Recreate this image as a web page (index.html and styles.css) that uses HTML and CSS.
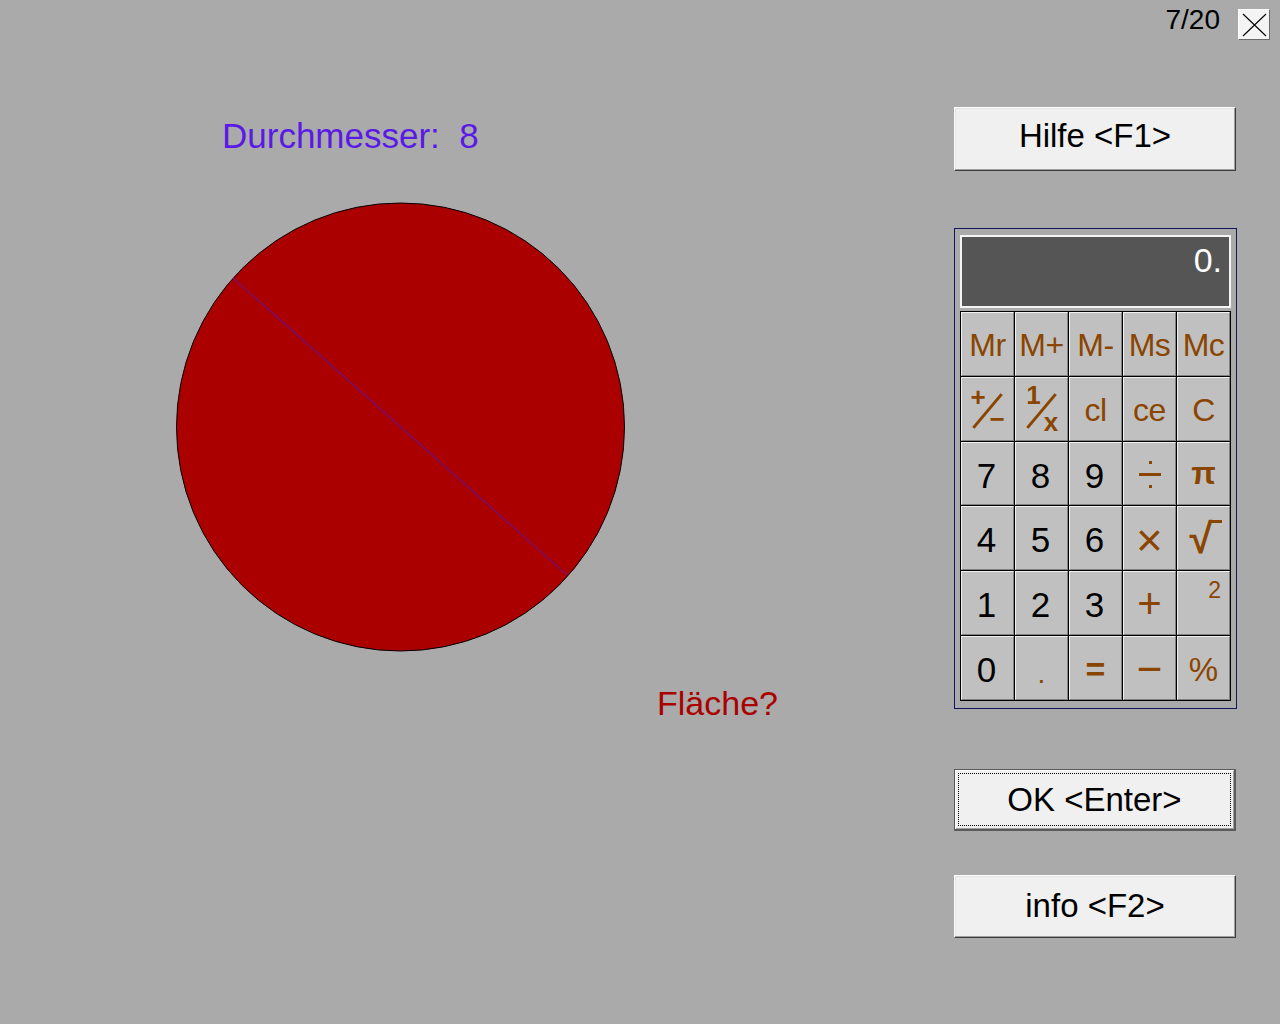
FILE: index.html
```html
<!DOCTYPE html>
<html lang="de">
<head>
<meta charset="utf-8">
<title>Fläche</title>
<link rel="stylesheet" href="styles.css">
</head>
<body>
<div class="page">
  <header class="topbar">
    <span class="counter">7/20</span>
    <span class="closebox">
      <svg width="29" height="28" viewBox="0 0 29 28"><path d="M3 3 L26 25 M26 3 L3 25" stroke="#000" stroke-width="1.1" fill="none"/></svg>
    </span>
  </header>
  <main class="main">
    <section class="task">
      <div class="given">Durchmesser:  8</div>
      <svg class="figure" width="452" height="452" viewBox="0 0 452 452">
        <circle cx="225.5" cy="225" r="224" fill="#aa0000" stroke="#000" stroke-width="1"/>
        <line x1="58" y1="76" x2="392" y2="373" stroke="#7e0c62" stroke-width="1.6"/>
      </svg>
      <div class="question">Fläche?</div>
    </section>
    <aside class="side">
      <div class="btn btn-help">Hilfe &lt;F1&gt;</div>
      <div class="calc">
        <div class="display">0.</div>
        <div class="keys">
          <div class="key op txt">Mr</div>
          <div class="key op txt">M+</div>
          <div class="key op txt">M-</div>
          <div class="key op txt">Ms</div>
          <div class="key op txt">Mc</div>

          <div class="key op"><span class="frac"><span class="n">+</span><span class="sl"></span><span class="d minus">−</span></span></div>
          <div class="key op"><span class="frac"><span class="n one">1</span><span class="sl"></span><span class="d">x</span></span></div>
          <div class="key op txt">cl</div>
          <div class="key op txt">ce</div>
          <div class="key op txt">C</div>

          <div class="key num">7</div>
          <div class="key num">8</div>
          <div class="key num">9</div>
          <div class="key op"><span class="divsym" aria-label="÷"></span></div>
          <div class="key op pi">π</div>

          <div class="key num">4</div>
          <div class="key num">5</div>
          <div class="key num">6</div>
          <div class="key op times">×</div>
          <div class="key op sqrt">√<span class="bar"></span></div>

          <div class="key num">1</div>
          <div class="key num">2</div>
          <div class="key num">3</div>
          <div class="key op plus">+</div>
          <div class="key op sq">2</div>

          <div class="key num">0</div>
          <div class="key op dot">.</div>
          <div class="key op eq">=</div>
          <div class="key op minusk">−</div>
          <div class="key op pct">%</div>
        </div>
      </div>
      <div class="btn btn-ok"><span class="focus">OK &lt;Enter&gt;</span></div>
      <div class="btn btn-info">info &lt;F2&gt;</div>
    </aside>
  </main>
</div>
</body>
</html>
```

FILE: styles.css
```css
* { box-sizing: border-box; }
html, body { margin: 0; padding: 0; }
body {
  background: #aaaaaa;
  font-family: "Liberation Sans", Arial, sans-serif;
  color: #000;
}
.page {
  width: 1280px;
  height: 1024px;
  display: flex;
  flex-direction: column;
}
.topbar {
  height: 40px;
  display: flex;
  justify-content: flex-end;
  align-items: flex-start;
  padding-top: 5px;
  padding-right: 10px;
}
.counter {
  font-size: 28px;
  line-height: 30px;
  margin-right: 18px;
}
.closebox {
  margin-top: 4px;
  width: 32px;
  height: 31px;
  background: #f4f4f4;
  border-top: 1px solid #ffffff;
  border-left: 1px solid #ffffff;
  border-right: 1px solid #696969;
  border-bottom: 1px solid #696969;
  display: flex;
  align-items: center;
  justify-content: center;
}
.closebox svg { display: block; }

.main {
  flex: 1;
  display: flex;
}
.task {
  flex: 1;
  display: flex;
  flex-direction: column;
  align-items: flex-start;
}
.given {
  margin-top: 76px;
  margin-left: 222px;
  font-size: 35px;
  line-height: 40px;
  color: #5a1ae6;
  white-space: pre;
}
.figure {
  display: block;
  margin-top: 46px;
  margin-left: 175px;
}
.question {
  margin-top: 29px;
  margin-left: 657px;
  font-size: 34px;
  line-height: 40px;
  color: #aa0000;
}

.side {
  width: 283px;
  margin-right: 43px;
  display: flex;
  flex-direction: column;
  align-items: flex-start;
}
.btn {
  width: 282px;
  background: #f0f0f0;
  border-top: 1px solid #ffffff;
  border-left: 1px solid #ffffff;
  border-right: 1px solid #3c3c3c;
  border-bottom: 1px solid #3c3c3c;
  box-shadow: inset -1px -1px 0 #a0a0a0, inset 1px 1px 0 #e3e3e3;
  display: flex;
  align-items: center;
  justify-content: center;
  font-size: 33px;
  line-height: 38px;
}
.btn-help {
  margin-top: 67px;
  height: 64px;
  padding-bottom: 6px;
}
.btn-ok {
  margin-top: 60px;
  height: 62px;
  border: 1px solid #5a5a5a;
  border-right-width: 2px;
  border-bottom-width: 2px;
  box-shadow: inset 1px 1px 0 #ffffff, inset -1px -1px 0 #a0a0a0;
  padding: 3px;
  align-items: stretch;
}
.btn-ok .focus {
  flex: 1;
  border: 1px dotted #000;
  display: flex;
  align-items: center;
  justify-content: center;
}
.btn-info {
  margin-top: 44px;
  height: 63px;
  padding-bottom: 2px;
}

.calc {
  margin-top: 57px;
  width: 283px;
  height: 481px;
  border: 1px solid #14145a;
  padding: 6px 5px 7px 5px;
  display: flex;
  flex-direction: column;
}
.display {
  height: 73px;
  background: #555555;
  border: 2px solid #f4f4f4;
  color: #ffffff;
  font-size: 34px;
  line-height: 36px;
  text-align: right;
  padding: 5px 7px 0 0;
}
.keys {
  margin-top: 3px;
  height: 390px;
  background: #000;
  padding: 1px;
  display: grid;
  grid-template-columns: repeat(5, 53px);
  grid-template-rows: repeat(6, 1fr);
  gap: 1px;
}
.key {
  background: #c0c0c0;
  border-top: 1px solid #f0f0f0;
  border-left: 1px solid #f0f0f0;
  border-right: 1px solid #808080;
  border-bottom: 1px solid #808080;
  display: flex;
  align-items: center;
  justify-content: center;
  line-height: 1;
}
.num { font-size: 35px; color: #000; padding-top: 3px; padding-right: 2px; }
.op { color: #8a4500; }
.txt { font-size: 32px; padding-top: 2px; letter-spacing: -0.5px; }

.frac {
  display: grid;
  grid-template-columns: 19px 19px;
  grid-template-rows: 22px 22px;
  width: 38px;
  height: 44px;
  margin-top: 4px;
}
.frac .n {
  grid-area: 1 / 1;
  place-self: start center;
  font-size: 26px;
  line-height: 22px;
  font-weight: bold;
  margin-top: -3px;
}
.frac .n.one { margin-left: 3px; margin-top: -5px; }
.frac .d {
  grid-area: 2 / 2;
  place-self: end center;
  font-size: 26px;
  line-height: 22px;
  font-weight: bold;
}
.frac .d.minus { margin-bottom: 3px; }
.frac .sl {
  grid-area: 1 / 1 / 3 / 3;
  place-self: center;
  width: 3px;
  height: 44px;
  background: currentColor;
  transform: rotate(40deg);
}

.divsym {
  position: relative;
  display: block;
  width: 22px;
  height: 3px;
  background: currentColor;
  margin-top: 2px;
}
.divsym::before, .divsym::after {
  content: "";
  position: absolute;
  left: 10px;
  width: 3px;
  height: 3px;
  background: currentColor;
}
.divsym::before { top: -12px; }
.divsym::after { top: 12px; }
.pi { font-size: 32px; font-weight: bold; padding-bottom: 2px; }
.times { font-size: 46px; padding-top: 4px; }
.sqrt { font-size: 42px; font-weight: bold; padding-left: 4px; padding-top: 2px; }
.sqrt .bar {
  display: block;
  width: 12px;
  height: 3px;
  background: currentColor;
  align-self: flex-start;
  margin-top: 11px;
  margin-left: -3px;
}
.plus { font-size: 42px; padding-top: 2px; }
.sq {
  font-size: 23px;
  align-items: flex-start;
  justify-content: flex-end;
  padding: 7px 8px 0 0;
}
.dot { font-size: 28px; padding-top: 12px; }
.eq { font-size: 34px; font-weight: bold; padding-top: 2px; }
.minusk { font-size: 44px; padding-top: 2px; }
.pct { font-size: 33px; padding-top: 2px; }
```
